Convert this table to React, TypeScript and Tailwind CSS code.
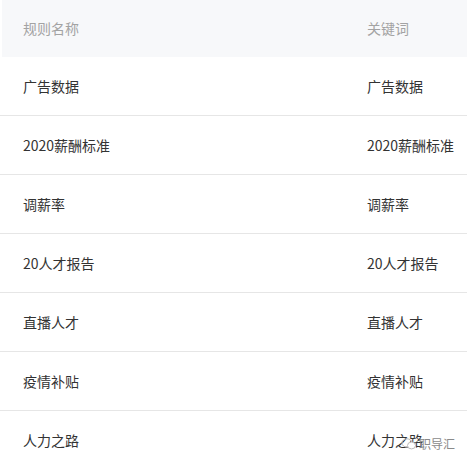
const rows = ["广告数据", "2020薪酬标准", "调薪率", "20人才报告", "直播人才", "疫情补贴", "人力之路"]

const App = () => {
  return (
    <div
      className="w-[467px] h-[467px] overflow-hidden bg-white relative text-[14px]"
      style={{ fontFamily: '"Noto Sans CJK SC", "Noto Sans", sans-serif' }}
    >
      <div className="flex items-center h-[57px] ml-[2px] bg-[#f7f8fa] text-[#a3a3a3]">
        <span className="pl-[21px] w-[365px]">规则名称</span>
        <span>关键词</span>
      </div>
      {rows.map((r) => (
        <div key={r} className="flex items-center h-[59px] border-b border-[#e6e6e6] text-[#333]">
          <span className="pl-[23px] w-[367px]">{r}</span>
          <span>{r}</span>
        </div>
      ))}
      <div className="absolute right-[12px] bottom-[14px] flex items-center gap-[2px] text-[12px] text-[#8a8a8a]">
        <svg width="16" height="14" viewBox="0 0 16 14" fill="none" stroke="#bbb" strokeWidth="1">
          <ellipse cx="6" cy="6" rx="5" ry="4.2" />
          <ellipse cx="10.5" cy="8.5" rx="4" ry="3.4" fill="white" />
        </svg>
        <span>职导汇</span>
      </div>
    </div>
  )
}

export default App
